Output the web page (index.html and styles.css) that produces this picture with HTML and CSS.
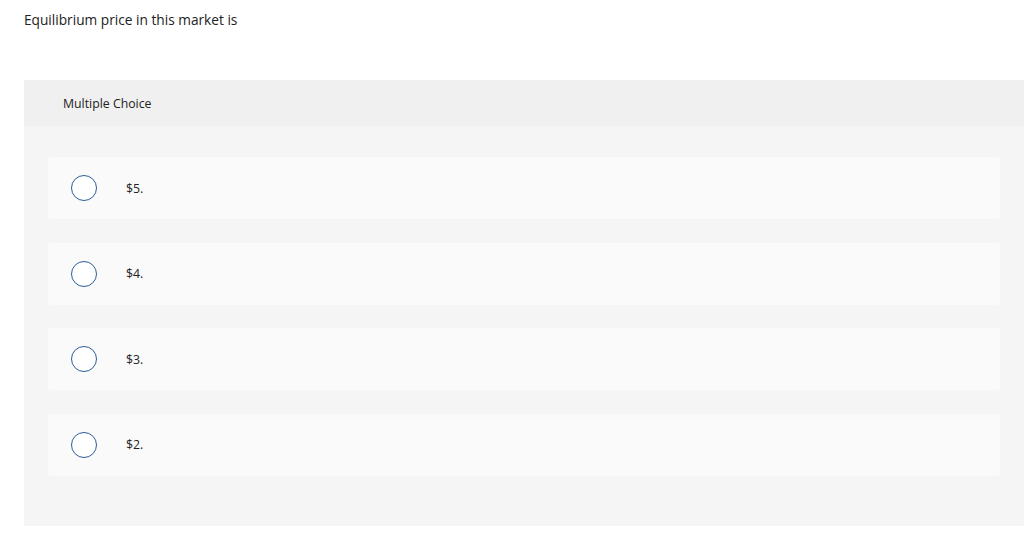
FILE: index.html
```html
<!DOCTYPE html>
<html>
<head>
<meta charset="utf-8">
<link rel="stylesheet" href="styles.css">
</head>
<body>
<div class="page">
  <p class="question">Equilibrium price in this market is</p>
  <div class="mc">
    <div class="mc-head">Multiple Choice</div>
    <div class="mc-body">
      <div class="opt"><span class="radio"></span><span class="label">$5.</span></div>
      <div class="opt"><span class="radio"></span><span class="label">$4.</span></div>
      <div class="opt"><span class="radio"></span><span class="label">$3.</span></div>
      <div class="opt"><span class="radio"></span><span class="label">$2.</span></div>
    </div>
  </div>
</div>
</body>
</html>
```
FILE: styles.css
```css
html, body { margin: 0; padding: 0; background: #fff; }
body { font-family: "Open Sans", "Liberation Sans", sans-serif; color: #222; }
.page { padding: 11px 0 0 24px; }
.question { margin: 0; font-size: 13.7px; line-height: 18px; height: 69px; }
.mc { background: #f5f5f5; }
.mc-head { background: #f0f0f0; height: 46px; padding-left: 39px; font-size: 12.3px; line-height: 47px; }
.mc-body { padding: 31px 24px 50px 24px; display: flex; flex-direction: column; gap: 23.5px; }
.opt { background: #fafafa; border-radius: 3px; height: 62px; display: flex; align-items: center; padding-left: 23px; }
.radio { width: 24px; height: 24px; border: 1px solid #2a5d99; border-radius: 50%; background: #fff; box-sizing: content-box; }
.label { margin-left: 29px; font-size: 12.3px; }
```
